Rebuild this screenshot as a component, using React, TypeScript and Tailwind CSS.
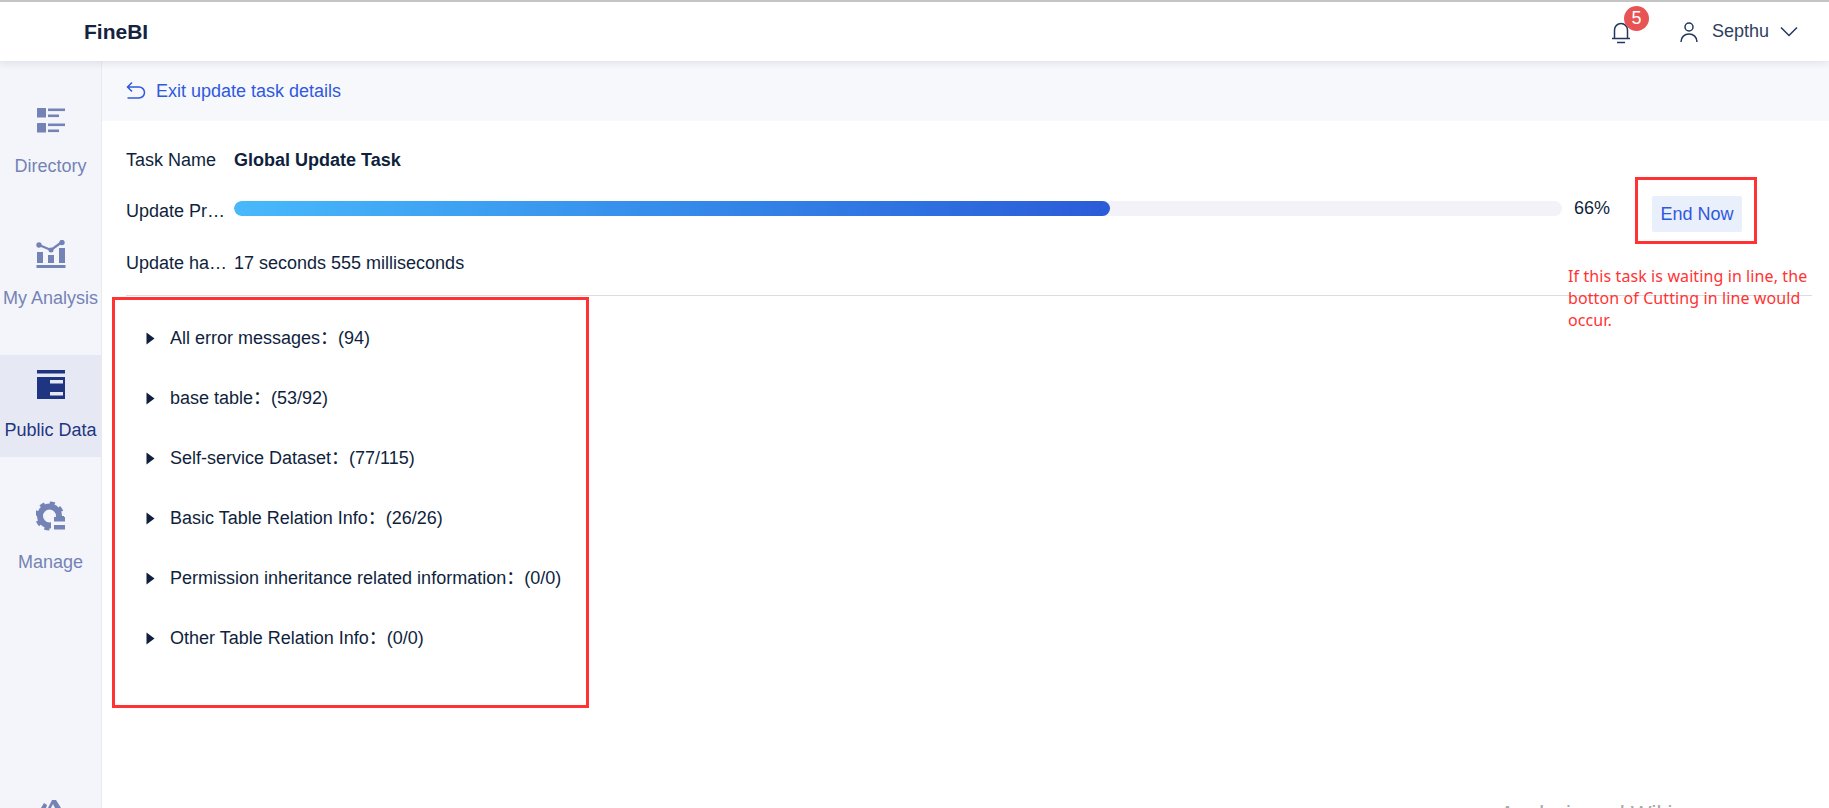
function Dir() {
  return (
    <svg width="30" height="26" viewBox="0 0 30 26" fill="#7483b5" className="mt-[2px]">
      <rect x="1" y="0" width="9" height="9.500" rx="0.500" />
      <rect x="1" y="15" width="9" height="9.500" rx="0.500" />
      <rect x="12" y="0.500" width="17" height="2.600" />
      <rect x="12" y="6.500" width="11" height="2.600" />
      <rect x="12" y="15.500" width="17" height="2.600" />
      <rect x="12" y="21.500" width="11" height="2.600" />
    </svg>
  );
}
function Analysis() {
  return (
    <svg width="30" height="28" viewBox="0 0 30 28" fill="#7483b5" className="mt-[3px]">
      <path d="M3 5 L15 10 L26 2" fill="none" stroke="#7483b5" strokeWidth="2.400" />
      <circle cx="3" cy="5" r="2.700" /><circle cx="15" cy="10" r="2.500" /><circle cx="26" cy="2.500" r="2.700" />
      <rect x="1" y="12" width="6" height="11" />
      <rect x="12" y="15" width="6" height="8" />
      <rect x="23" y="8" width="6" height="15" />
      <rect x="0.500" y="25" width="29" height="3" />
    </svg>
  );
}
function PublicData() {
  return (
    <svg width="30" height="29" viewBox="0 0 30 29">
      <rect x="1" y="0" width="28" height="3.500" fill="#1f3582" />
      <rect x="1" y="7" width="28" height="22" fill="#1f3582" />
      <rect x="14" y="10" width="13" height="3.500" fill="#e6e9f3" />
      <rect x="14" y="22" width="13" height="3.500" fill="#e6e9f3" />
    </svg>
  );
}
function Manage() {
  return (
    <svg width="30" height="30" viewBox="0 0 30 30" fill="none">
      <circle cx="13.500" cy="15" r="9.500" stroke="#7483b5" strokeWidth="6" />
      <circle cx="13.500" cy="15" r="13" stroke="#7483b5" strokeWidth="3.200" strokeDasharray="5 5.200" />
      <rect x="15" y="16" width="15" height="14" fill="#f4f5fa" />
      <rect x="18" y="16" width="11" height="4.500" fill="#7483b5" />
      <rect x="18" y="24" width="11" height="4.500" fill="#7483b5" />
    </svg>
  );
}

const navItems = [
  { label: "Directory", icon: <Dir /> },
  { label: "My Analysis", icon: <Analysis /> },
  { label: "Public Data", icon: <PublicData />, active: true },
  { label: "Manage", icon: <Manage /> },
];

const rows = [
  ["All error messages", "(94)"],
  ["base table", "(53/92)"],
  ["Self-service Dataset", "(77/115)"],
  ["Basic Table Relation Info", "(26/26)"],
  ["Permission inheritance related information", "(0/0)"],
  ["Other Table Relation Info", "(0/0)"],
];

export default function App() {
  return (
    <div className="h-[808px] w-[1829px] overflow-hidden flex flex-col bg-white text-[18px] text-[#0f1f3d] relative font-['Liberation_Sans','Noto_Sans_CJK_SC',sans-serif]">
      <header className="h-[61px] shrink-0 border-t-2 border-t-[#c4c4c4] bg-white flex items-center justify-between shadow-[0_2px_8px_rgba(20,30,70,0.1)] relative z-10">
        <div className="pl-[84px] text-[21px] font-bold text-[#14233f]">FineBI</div>
        <div className="flex items-center text-[#2f3f5f]">
          <div className="relative mr-[49px] mt-[2px]">
            <svg width="20" height="22" viewBox="0 0 20 22" fill="none" stroke="#23365c" strokeWidth="1.500" className="block">
              <path d="M1 16.500h18M3.500 16.500V8a6.500 6.500 0 0 1 13 0v8.500" />
              <path d="M6 20.500h8" />
            </svg>
            <span className="absolute -top-[16px] left-[13px] w-[25px] h-[25px] rounded-full bg-[#e85454] text-white text-[18px] flex items-center justify-center">5</span>
          </div>
          <svg width="18" height="20" viewBox="0 0 18 20" fill="none" stroke="#23365c" strokeWidth="1.500" className="mr-[14px]">
            <circle cx="9" cy="5" r="4" />
            <path d="M1 20c0-5 3.500-8 8-8s8 3 8 8" />
          </svg>
          <span>Septhu</span>
          <svg width="18" height="11" viewBox="0 0 18 11" fill="none" stroke="#23365c" strokeWidth="1.500" className="ml-[11px] mr-[31px]">
            <path d="M1 1.500 9 9.500 17 1.500" />
          </svg>
        </div>
      </header>

      <div className="flex flex-1 min-h-0">
        <aside className="w-[102px] shrink-0 border-r border-r-[#e8eaf0] bg-[#f4f5fa] flex flex-col gap-[30px] pt-[30px]">
          {navItems.map((n) => (
            <div key={n.label} className={`h-[102px] flex flex-col items-center pt-[14px] gap-[18px] ${n.active ? "bg-[#e6e9f3] text-[#1f3582]" : "text-[#7483b5]"}`}>
              <div className="h-[30px] flex items-center">{n.icon}</div>
              <div className="whitespace-nowrap">{n.label}</div>
            </div>
          ))}
          <svg width="20" height="8" viewBox="0 0 20 8" fill="#7483b5" className="mx-auto mt-auto shrink-0">
            <path d="M7 8 L11 0 H15 L20 8 H14 L12 4 L10 8Z" />
            <path d="M0 8 L3 3 L6 5 L5 8Z" />
          </svg>
        </aside>

        <main className="flex-1 min-w-0 flex flex-col">
          <div className="h-[60px] shrink-0 bg-[#f7f8fc] flex items-center pl-[24px] gap-[10px] text-[#3058e0]">
            <svg width="20" height="20" viewBox="0 0 20 20" fill="none" stroke="#3058e0" strokeWidth="1.500">
              <path d="M6 1.500 1.500 6 6 10.500M1.500 6H13a5.500 5.500 0 0 1 0 11H1.500" />
            </svg>
            <span>Exit update task details</span>
          </div>

          <div className="pl-[24px] pr-[17px]">
            <div className="h-[175px] border-b border-b-[#dcdcdc] pt-[26px] flex flex-col">
              <div className="flex items-center h-[26px]">
                <div className="w-[108px] shrink-0">Task Name</div>
                <div className="font-bold">Global Update Task</div>
              </div>
              <div className="flex items-center h-[26px] mt-[25px]">
                <div className="w-[108px] shrink-0 pr-[6px] truncate">Update Progress</div>
                <div className="w-[1328px] h-[15px] rounded-full bg-[#f2f2f8] overflow-hidden -mt-[6px]">
                  <div className="h-full rounded-full bg-gradient-to-r from-[#48b9fb] to-[#2b5bd8]" style={{ width: "66%" }} />
                </div>
                <div className="ml-[12px] -mt-[6px] w-[78px] shrink-0">66%</div>
                <button className="w-[90px] h-[36px] shrink-0 rounded-[2px] bg-[#e9effb] text-[#3058e0] mt-[6px]">End Now</button>
              </div>
              <div className="flex items-center h-[26px] mt-[26px]">
                <div className="w-[108px] shrink-0 pr-[6px] truncate">Update has taken</div>
                <div>17 seconds 555 milliseconds</div>
              </div>
            </div>
          </div>

          <div className="pl-[44px] pt-[12px] flex flex-col">
            {rows.map(([a, b]) => (
              <div key={a} className="h-[60px] flex items-center">
                <svg width="9" height="13" viewBox="0 0 9 13" fill="#0f1f3d" className="mr-[15px] shrink-0">
                  <path d="M0.500 0.500 8.500 6.500 0.500 12.500Z" />
                </svg>
                <span className="whitespace-nowrap">{a}：{b}</span>
              </div>
            ))}
          </div>
        </main>
      </div>

      <div className="absolute left-[112px] top-[297px] w-[477px] h-[411px] border-[3px] border-[#ff3333]" />
      <div className="absolute left-[1635px] top-[177px] w-[122px] h-[67px] border-[3px] border-[#ff3333]" />
      <div className="absolute left-[1568px] top-[265px] w-[245px] text-[16px] leading-[22px] tracking-[0.1px] text-[#ff3333] font-['Noto_Sans','Noto_Sans_CJK_SC',sans-serif]">
        If this task is waiting in line, the botton of Cutting in line would occur.
      </div>
      <div className="absolute left-[1500px] top-[802px] text-[22px] leading-[24px] text-[#a8a8a8] whitespace-nowrap">Analysis and Wiki</div>
    </div>
  );
}
